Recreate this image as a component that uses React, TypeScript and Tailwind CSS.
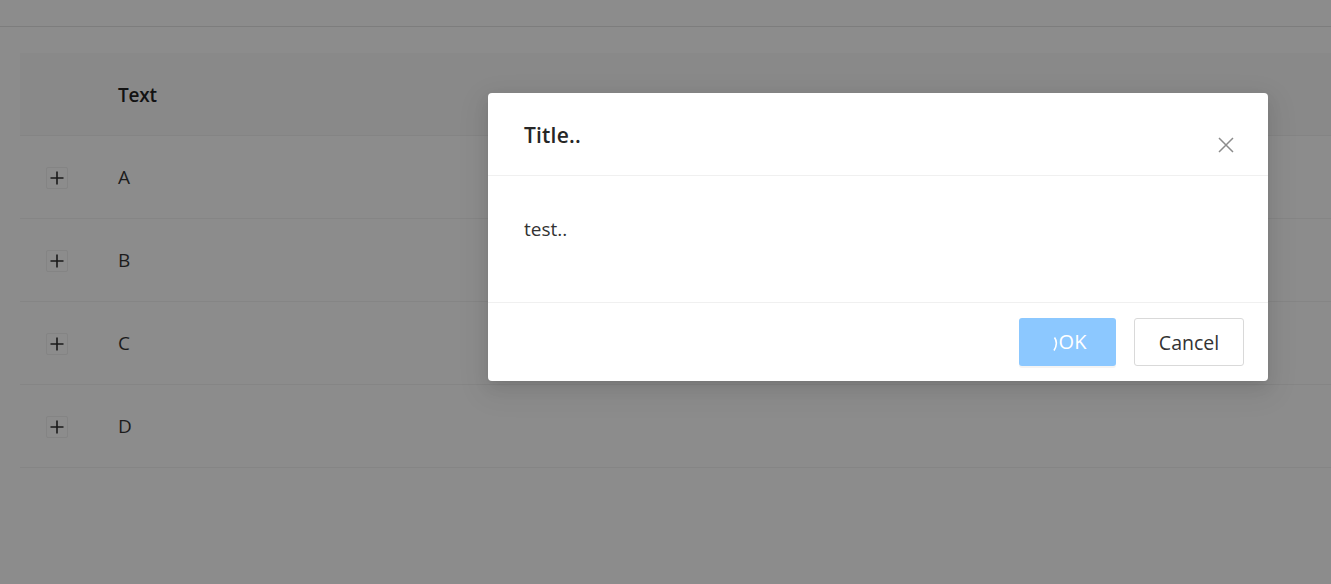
import React from "react";

function Plus() {
  return (
    <div className="w-[22px] h-[22px] border border-[#848484] rounded-[2px] flex items-center justify-center">
      <svg width="16" height="16" viewBox="0 0 16 16">
        <path d="M8 1.5V14.5M1.5 8H14.5" stroke="#1a1a1a" strokeWidth="1.6" />
      </svg>
    </div>
  );
}

const rows = ["A", "B", "C", "D"];

export default function App() {
  return (
    <div
      className="relative w-full h-[584px] overflow-hidden bg-[#8c8c8c]"
      style={{ fontFamily: '"Open Sans", "Noto Sans", sans-serif' }}
    >
      <div className="h-[27px] border-b border-[#7d7d7d]" />
      <div className="pl-[20px] pt-[26px]">
        <div className="w-[1400px]">
          <div className="flex items-center h-[83px] bg-[#898989] border-b border-[#848484]">
            <div className="w-[98px]" />
            <div className="text-[19px] font-semibold text-[#121212] tracking-[-0.2px] pt-[2px]">Text</div>
          </div>
          {rows.map((r) => (
            <div key={r} className="flex items-center h-[83px] border-b border-[#858585]">
              <div className="w-[98px] pl-[26px] pt-[2px]">
                <Plus />
              </div>
              <div className="text-[19px] text-[#1c1c1c]">{r}</div>
            </div>
          ))}
        </div>
      </div>

      <div className="absolute left-[488px] top-[93px] w-[780px] bg-white rounded-[4px] shadow-[0_3px_6px_-4px_rgba(0,0,0,0.12),0_6px_16px_0_rgba(0,0,0,0.08),0_9px_28px_8px_rgba(0,0,0,0.05)]">
        <div className="relative h-[83px] px-[36px] flex items-center border-b border-[#f0f0f0]">
          <div className="text-[21px] font-semibold text-[#262626] tracking-[0.2px] pt-[3px]">Title..</div>
          <button className="absolute right-[34px] top-[44px] w-[16px] h-[16px] flex items-center justify-center">
            <svg width="16" height="16" viewBox="0 0 16 16">
              <path d="M1 1L15 15M15 1L1 15" stroke="#8c8c8c" strokeWidth="1.5" />
            </svg>
          </button>
        </div>
        <div className="h-[127px] px-[36px] pt-[39px] border-b border-[#f0f0f0]">
          <div className="text-[19px] leading-[28px] text-[#333333]">test..</div>
        </div>
        <div className="h-[78px] flex justify-end items-start pt-[15px] pr-[24px] gap-[18px]">
          <button className="w-[97px] h-[48px] rounded-[3px] bg-[#8cc8ff] text-white text-[20px] flex items-center justify-center pl-[4px] shadow-[0_2px_0_rgba(0,0,0,0.045)]">
            <svg width="6" height="18" viewBox="0 0 6 18" className="mt-[4px]">
              <path d="M1.5 2.5 Q5.5 8 1 15.5" stroke="white" strokeWidth="1.6" fill="none" />
            </svg>
            <span>OK</span>
          </button>
          <button className="w-[110px] h-[48px] rounded-[3px] bg-white border border-[#d9d9d9] text-[#333333] text-[19.5px] flex items-center justify-center pt-[2px]">
            Cancel
          </button>
        </div>
      </div>
    </div>
  );
}
